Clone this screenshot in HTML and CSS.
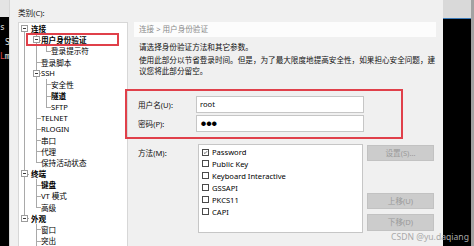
FILE: index.html
```html
<!DOCTYPE html>
<html lang="zh-CN">
<head>
    <meta charset="UTF-8">
    <title>会话选项 - 用户身份验证</title>
    <link rel="stylesheet" href="styles.css">
</head>
<body>
    <div class="screen">
        <!-- terminal window behind the dialog -->
        <div class="term term-left">
            <div class="term-bar"></div>
            <div class="term-text">
                <div>s</div>
                <div class="ind">S</div>
                <div><span class="red">L</span>m</div>
            </div>
        </div>

        <div class="dialog">
            <div class="cat-label">类别(C):</div>
            <div class="dialog-body">
                <!-- Category tree -->
                <div class="tree">
                    <div class="node lv0 first"><span class="exp"></span><b>连接</b></div>
                    <div class="node lv1 g0"><span class="exp"></span><b>用户身份验证</b></div>
                    <div class="node lv2 g01 last">登录提示符</div>
                    <div class="node lv1 g0">登录脚本</div>
                    <div class="node lv1 g0"><span class="exp"></span>SSH</div>
                    <div class="node lv2 g01">安全性</div>
                    <div class="node lv2 g01"><b>隧道</b></div>
                    <div class="node lv2 g01 last">SFTP</div>
                    <div class="node lv1 g0">TELNET</div>
                    <div class="node lv1 g0">RLOGIN</div>
                    <div class="node lv1 g0">串口</div>
                    <div class="node lv1 g0">代理</div>
                    <div class="node lv1 g0 last">保持活动状态</div>
                    <div class="node lv0"><span class="exp"></span><b>终端</b></div>
                    <div class="node lv1 g0"><b>键盘</b></div>
                    <div class="node lv1 g0">VT 模式</div>
                    <div class="node lv1 g0 last">高级</div>
                    <div class="node lv0 last"><span class="exp"></span><b>外观</b></div>
                    <div class="node lv1">窗口</div>
                    <div class="node lv1">突出</div>
                </div>

                <!-- Page: 用户身份验证 -->
                <div class="page">
                    <div class="crumb">连接 &gt; 用户身份验证</div>
                    <p class="desc">请选择身份验证方法和其它参数。</p>
                    <p class="desc desc-2">使用此部分以节省登录时间。但是，为了最大限度地提高安全性，如果担心安全问题，建<br>议您将此部分留空。</p>

                    <div class="cred">
                        <div class="field">
                            <span class="field-label">用户名(U):</span>
                            <div class="input">root</div>
                        </div>
                        <div class="field">
                            <span class="field-label">密码(P):</span>
                            <div class="input pass">●●●</div>
                        </div>
                    </div>

                    <div class="method">
                        <span class="method-label">方法(M):</span>
                        <div class="list">
                            <div class="opt"><span class="box"><svg viewBox="0 0 7 7"><path d="M1.3 3.5 L2.8 5 L5.7 1.7" /></svg></span>Password</div>
                            <div class="opt"><span class="box"></span>Public Key</div>
                            <div class="opt"><span class="box"></span>Keyboard Interactive</div>
                            <div class="opt"><span class="box"></span>GSSAPI</div>
                            <div class="opt"><span class="box"></span>PKCS11</div>
                            <div class="opt"><span class="box"></span>CAPI</div>
                        </div>
                        <div class="btns">
                            <div class="btn btn-set">设置(S)...</div>
                            <div class="btn btn-up">上移(U)</div>
                            <div class="btn btn-down">下移(D)</div>
                        </div>
                    </div>
                </div>
            </div>
        </div>

        <div class="term term-right">
            <div class="term-bar"></div>
        </div>

        <!-- red annotation boxes and watermark drawn over the screenshot -->
        <div class="mark mark-tree"></div>
        <div class="mark mark-cred"></div>
        <div class="watermark">CSDN @yu.daqiang</div>
    </div>
</body>
</html>
```

FILE: styles.css
```css
body {
    margin: 0;
    background: #000;
    font-family: "Noto Sans", "Noto Sans CJK SC", sans-serif;
    font-size: 7.6px;
    color: #111;
}
.screen {
    position: relative;
    display: flex;
    width: 474px;
    height: 246px;
    overflow: hidden;
}

/* terminal strips left and right */
.term {
    display: flex;
    flex-direction: column;
    background: #000;
}
.term-left {
    width: 9px;
}
.term-left .term-bar {
    height: 17px;
    background: #e4e4e4;
}
.term-text {
    font-family: "DejaVu Sans Mono", monospace;
    font-size: 8px;
    line-height: 14.5px;
    color: #e6e6e6;
    padding-top: 4px;
    white-space: nowrap;
}
.term-text .ind {
    padding-left: 5px;
}
.term-text .red {
    color: #e04848;
}
.term-right {
    width: 28px;
    border-right: 3px solid #a2a2a2;
}
.term-right .term-bar {
    height: 18px;
    background: #d9d9d9;
    border-bottom: 1px solid #3d7cba;
}

/* dialog */
.dialog {
    width: 434px;
    box-sizing: border-box;
    background: #f0f0f0;
    border-left: 1px solid #d6d6d6;
    padding: 7.5px 0 0 8px;
}
.cat-label {
    height: 11px;
    line-height: 11px;
}
.dialog-body {
    display: flex;
    gap: 6px;
    margin-top: 3.5px;
}

/* tree */
.tree {
    width: 110px;
    height: 230px;
    box-sizing: border-box;
    border: 1px solid #d7d7d7;
    border-bottom: none;
    background: #fff;
    color: #000;
}
.node {
    --lx: 5px;
    position: relative;
    display: flex;
    align-items: center;
    height: 11.16px;
    white-space: nowrap;
    background-repeat: no-repeat;
}
.node b {
    font-weight: 700;
}
.lv0 {
    padding-left: 2px;
}
.lv1 {
    --lx: 17px;
    padding-left: 22px;
}
.lv1:has(.exp) {
    padding-left: 14px;
}
.lv2 {
    --lx: 27px;
    padding-left: 32px;
}
.node::before {
    content: "";
    position: absolute;
    left: var(--lx);
    top: 0;
    width: 4px;
    height: 50%;
    border-left: 1px solid #a9a9a9;
    border-bottom: 1px solid #a9a9a9;
}
.node::after {
    content: "";
    position: absolute;
    left: var(--lx);
    top: 50%;
    bottom: 0;
    border-left: 1px solid #a9a9a9;
}
.node.first::before {
    border-left: none;
}
.node.last::after {
    display: none;
}
.g0 {
    background-image: linear-gradient(#a9a9a9, #a9a9a9);
    background-size: 1px 100%;
    background-position: 5px 0;
}
.g01 {
    background-image: linear-gradient(#a9a9a9, #a9a9a9), linear-gradient(#a9a9a9, #a9a9a9);
    background-size: 1px 100%, 1px 100%;
    background-position: 5px 0, 17px 0;
}
.exp {
    position: relative;
    z-index: 1;
    width: 7px;
    height: 7px;
    box-sizing: border-box;
    border: 1px solid #9c9c9c;
    background: linear-gradient(#3c3c3c, #3c3c3c) center / 3px 1px no-repeat, #fff;
    margin-right: 3px;
}
.lv1 .exp {
    margin-right: 1px;
}

/* right page */
.page {
    width: 302px;
}
.crumb {
    height: 15px;
    line-height: 15px;
    background: #fcfcfc;
    color: #8a8a8a;
    padding-left: 5px;
}
.desc {
    margin: 5.25px 0 0;
    padding-left: 5px;
    line-height: 11.5px;
    white-space: nowrap;
}
.desc-2 {
    margin-top: 1.5px;
    line-height: 11.2px;
}
.cred {
    display: flex;
    flex-direction: column;
    gap: 2px;
    margin-top: 18px;
}
.field {
    display: flex;
    align-items: center;
    height: 17px;
}
.field-label {
    width: 62px;
    box-sizing: border-box;
    padding-left: 4px;
}
.input {
    width: 168px;
    height: 17px;
    box-sizing: border-box;
    border: 1px solid #c6c6c6;
    background: #fff;
    padding-left: 3px;
    line-height: 15px;
    color: #000;
}
.input.pass {
    padding-left: 4px;
    font-size: 5px;
    letter-spacing: 0.4px;
}
.method {
    display: flex;
    margin-top: 12px;
}
.method-label {
    width: 64px;
    box-sizing: border-box;
    padding: 3.5px 0 0 4px;
}
.list {
    width: 165px;
    height: 89px;
    box-sizing: border-box;
    border: 1px solid #c6c6c6;
    background: #fff;
    padding: 1.5px 0 0 3px;
    color: #000;
}
.opt {
    display: flex;
    align-items: center;
    gap: 3px;
    height: 11.9px;
}
.box {
    width: 7px;
    height: 7px;
    box-sizing: border-box;
    border: 1px solid #4a4a4a;
    background: #fff;
}
.box svg {
    display: block;
    width: 5px;
    height: 5px;
}
.box path {
    fill: none;
    stroke: #333;
    stroke-width: 1;
}
.btns {
    display: flex;
    flex-direction: column;
    width: 67px;
    margin-left: 4px;
}
.btn {
    height: 16.5px;
    box-sizing: border-box;
    border: 1px solid #c2c2c2;
    background: #cccccc;
    color: #9a9a9a;
    text-align: center;
    line-height: 14.5px;
}
.btn-set {
    margin-top: 1px;
}
.btn-up {
    margin-top: 31.5px;
}
.btn-down {
    margin-top: 5px;
}

/* overlays */
.mark {
    position: absolute;
    box-sizing: border-box;
    border: 2px solid #e0404a;
}
.mark-tree {
    left: 26px;
    top: 33px;
    width: 93px;
    height: 13px;
}
.mark-cred {
    left: 125px;
    top: 89px;
    width: 278px;
    height: 50px;
}
.watermark {
    position: absolute;
    left: 391px;
    top: 231px;
    font-size: 8.6px;
    line-height: 12px;
    color: #a9a9a9;
    white-space: nowrap;
}
```
